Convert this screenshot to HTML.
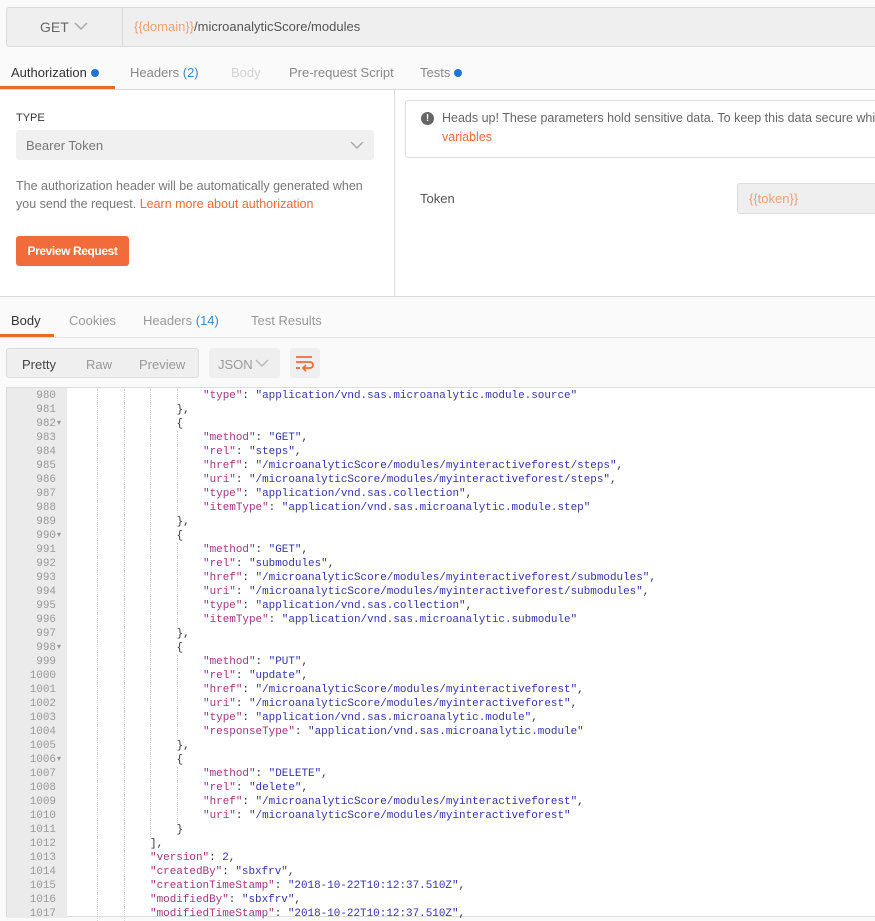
<!DOCTYPE html>
<html><head><meta charset="utf-8"><style>
*{margin:0;padding:0;box-sizing:border-box}
body{width:875px;height:912px;overflow:hidden;background:#fafafa;font-family:"Liberation Sans",sans-serif;font-size:12.5px;color:#505050;position:relative}
.a{position:absolute;white-space:nowrap}
.or{color:#f26b3a}
.code{font-family:"Liberation Mono",monospace;font-size:10.95px;line-height:14px}
.k{color:#a2357e}.s{color:#3434a8}.n{color:#3434a8}
.g{position:absolute;border-left:1px dotted #d0d0d0;width:0}
.t{font-size:13px}
</style></head><body>
<div class="a" style="left:6px;top:7px;width:880px;height:40px;background:#efefef;border:1px solid #dadada;border-radius:3px"></div>
<div class="a" style="left:122px;top:8px;width:1px;height:38px;background:#dadada"></div>
<div class="a" style="left:40px;top:19px;font-size:14px;color:#666">GET</div>
<svg class="a" style="left:74px;top:22px" width="14" height="9"><path d="M1 1l6 6 6-6" fill="none" stroke="#aaa" stroke-width="1.5"/></svg>
<div class="a" style="left:134px;top:19px;font-size:13px;color:#555"><span style="color:#f0a070">{{domain}}</span>/microanalyticScore/modules</div>
<div class="a" style="left:0;top:89px;width:875px;height:1px;background:#dadada"></div>
<div class="a" style="left:0;top:86px;width:115px;height:3px;background:#e36c2c"></div>
<div class="a t" style="left:11px;top:65px;color:#333">Authorization <span style="display:inline-block;width:8px;height:8px;border-radius:50%;background:#1f74d6"></span></div>
<div class="a t" style="left:130px;top:65px;color:#888">Headers <span style="color:#3a88c8">(2)</span></div>
<div class="a t" style="left:231px;top:65px;color:#d4d4d4">Body</div>
<div class="a t" style="left:289px;top:65px;color:#888">Pre-request Script</div>
<div class="a t" style="left:420px;top:65px;color:#888">Tests <span style="display:inline-block;width:8px;height:8px;border-radius:50%;background:#1f74d6"></span></div>
<div class="a" style="left:0;top:90px;width:875px;height:206px;background:#fff"></div>
<div class="a" style="left:394px;top:90px;width:1px;height:206px;background:#dadada"></div>
<div class="a" style="left:0;top:296px;width:875px;height:1px;background:#dadada"></div>
<div class="a" style="left:16px;top:112px;font-size:11px;color:#333">TYPE</div>
<div class="a" style="left:16px;top:130px;width:358px;height:30px;background:#f0f0f0;border-radius:3px"></div>
<div class="a t" style="left:26px;top:138px;color:#777">Bearer Token</div>
<svg class="a" style="left:350px;top:141px" width="14" height="9"><path d="M1 1l6 6 6-6" fill="none" stroke="#aaa" stroke-width="1.5"/></svg>
<div class="a" style="left:16px;top:177px;color:#777;line-height:18px">The authorization header will be automatically generated when<br>you send the request. <span class="or">Learn more about authorization</span></div>
<div class="a" style="left:16px;top:236px;width:113px;height:30px;background:#f26b3a;border-radius:3px;color:#fff;font-weight:bold;font-size:12px;letter-spacing:-0.4px;line-height:30px;text-align:center">Preview Request</div>
<div class="a" style="left:405px;top:100px;width:480px;height:58px;border:1px solid #dadada;border-radius:3px"></div>
<div class="a" style="left:421px;top:112px;width:13px;height:13px;border-radius:50%;background:#666;color:#fff;font-size:10px;font-weight:bold;text-align:center;line-height:13px">!</div>
<div class="a" style="left:442px;top:111px;color:#666">Heads up! These parameters hold sensitive data. To keep this data secure whi</div>
<div class="a" style="left:442px;top:130px;color:#f26b3a">variables</div>
<div class="a t" style="left:420px;top:191px;color:#555">Token</div>
<div class="a" style="left:737px;top:183px;width:150px;height:31px;background:#efefef;border:1px solid #ddd;border-radius:3px"></div>
<div class="a t" style="left:749px;top:191px;color:#f0a070">{{token}}</div>
<div class="a" style="left:0;top:337px;width:875px;height:1px;background:#e4e4e4"></div>
<div class="a" style="left:0;top:334px;width:54px;height:3px;background:#e36c2c"></div>
<div class="a t" style="left:11px;top:313px;color:#333">Body</div>
<div class="a t" style="left:69px;top:313px;color:#999">Cookies</div>
<div class="a t" style="left:143px;top:313px;color:#999">Headers <span style="color:#3a88c8">(14)</span></div>
<div class="a t" style="left:251px;top:313px;color:#999">Test Results</div>
<div class="a" style="left:6px;top:348px;width:193px;height:30px;background:#efefef;border:1px solid #dcdcdc;border-radius:3px"></div>
<div class="a t" style="left:22px;top:357px;color:#444">Pretty</div>
<div class="a t" style="left:86px;top:357px;color:#999">Raw</div>
<div class="a t" style="left:139px;top:357px;color:#999">Preview</div>
<div class="a" style="left:209px;top:348px;width:71px;height:30px;background:#efefef;border-radius:3px"></div>
<div class="a t" style="left:218px;top:357px;color:#999">JSON</div>
<svg class="a" style="left:255px;top:359px" width="14" height="9"><path d="M1 1l6 6 6-6" fill="none" stroke="#bbb" stroke-width="1.5"/></svg>
<div class="a" style="left:290px;top:348px;width:30px;height:30px;background:#efefef;border-radius:3px"></div>
<svg class="a" style="left:295px;top:354px" width="20" height="18"><path d="M1 3h16M1 8h14a3 3 0 0 1 0 6h-6M11 11l-3 3 3 3M1 14h4" fill="none" stroke="#f26b3a" stroke-width="1.8"/></svg>
<div class="a" style="left:6px;top:387px;width:880px;height:530px;background:#fff;border:1px solid #dcdcdc"></div>
<div class="a" style="left:7px;top:388px;width:60px;height:530px;background:#ebebeb"></div>
<div id="code"></div>
<script>
var L=[
[980,4,'<span class="k">"type"</span>: <span class="s">"application/vnd.sas.microanalytic.module.source"</span>'],
[981,3,'},'],
[982,3,'{',1],
[983,4,'<span class="k">"method"</span>: <span class="s">"GET"</span>,'],
[984,4,'<span class="k">"rel"</span>: <span class="s">"steps"</span>,'],
[985,4,'<span class="k">"href"</span>: <span class="s">"/microanalyticScore/modules/myinteractiveforest/steps"</span>,'],
[986,4,'<span class="k">"uri"</span>: <span class="s">"/microanalyticScore/modules/myinteractiveforest/steps"</span>,'],
[987,4,'<span class="k">"type"</span>: <span class="s">"application/vnd.sas.collection"</span>,'],
[988,4,'<span class="k">"itemType"</span>: <span class="s">"application/vnd.sas.microanalytic.module.step"</span>'],
[989,3,'},'],
[990,3,'{',1],
[991,4,'<span class="k">"method"</span>: <span class="s">"GET"</span>,'],
[992,4,'<span class="k">"rel"</span>: <span class="s">"submodules"</span>,'],
[993,4,'<span class="k">"href"</span>: <span class="s">"/microanalyticScore/modules/myinteractiveforest/submodules"</span>,'],
[994,4,'<span class="k">"uri"</span>: <span class="s">"/microanalyticScore/modules/myinteractiveforest/submodules"</span>,'],
[995,4,'<span class="k">"type"</span>: <span class="s">"application/vnd.sas.collection"</span>,'],
[996,4,'<span class="k">"itemType"</span>: <span class="s">"application/vnd.sas.microanalytic.submodule"</span>'],
[997,3,'},'],
[998,3,'{',1],
[999,4,'<span class="k">"method"</span>: <span class="s">"PUT"</span>,'],
[1000,4,'<span class="k">"rel"</span>: <span class="s">"update"</span>,'],
[1001,4,'<span class="k">"href"</span>: <span class="s">"/microanalyticScore/modules/myinteractiveforest"</span>,'],
[1002,4,'<span class="k">"uri"</span>: <span class="s">"/microanalyticScore/modules/myinteractiveforest"</span>,'],
[1003,4,'<span class="k">"type"</span>: <span class="s">"application/vnd.sas.microanalytic.module"</span>,'],
[1004,4,'<span class="k">"responseType"</span>: <span class="s">"application/vnd.sas.microanalytic.module"</span>'],
[1005,3,'},'],
[1006,3,'{',1],
[1007,4,'<span class="k">"method"</span>: <span class="s">"DELETE"</span>,'],
[1008,4,'<span class="k">"rel"</span>: <span class="s">"delete"</span>,'],
[1009,4,'<span class="k">"href"</span>: <span class="s">"/microanalyticScore/modules/myinteractiveforest"</span>,'],
[1010,4,'<span class="k">"uri"</span>: <span class="s">"/microanalyticScore/modules/myinteractiveforest"</span>'],
[1011,3,'}'],
[1012,2,'],'],
[1013,2,'<span class="k">"version"</span>: <span class="n">2</span>,'],
[1014,2,'<span class="k">"createdBy"</span>: <span class="s">"sbxfrv"</span>,'],
[1015,2,'<span class="k">"creationTimeStamp"</span>: <span class="s">"2018-10-22T10:12:37.510Z"</span>,'],
[1016,2,'<span class="k">"modifiedBy"</span>: <span class="s">"sbxfrv"</span>,'],
[1017,2,'<span class="k">"modifiedTimeStamp"</span>: <span class="s">"2018-10-22T10:12:37.510Z"</span>,']
];
var X=[97,123.5,150,176.5,203];var h='';
L.forEach(function(l,i){var y=389+i*14;
h+='<div class="a code" style="left:0;top:'+y+'px;width:56px;text-align:right;color:#999">'+l[0]+'</div>';
if(l[3])h+='<div class="a code" style="left:57px;top:'+y+'px;color:#999;font-size:8px">&#9662;</div>';
var g=[0,1];if(l[0]<=1011)g.push(2);if(l[1]==4)g.push(3);
g.forEach(function(k){if(X[k]<X[l[1]])h+='<div class="g" style="left:'+X[k]+'px;top:'+y+'px;height:14px"></div>';});
h+='<div class="a code" style="left:'+X[l[1]]+'px;top:'+y+'px;color:#333">'+l[2]+'</div>';});
document.getElementById('code').innerHTML=h;
</script>
</body></html>
